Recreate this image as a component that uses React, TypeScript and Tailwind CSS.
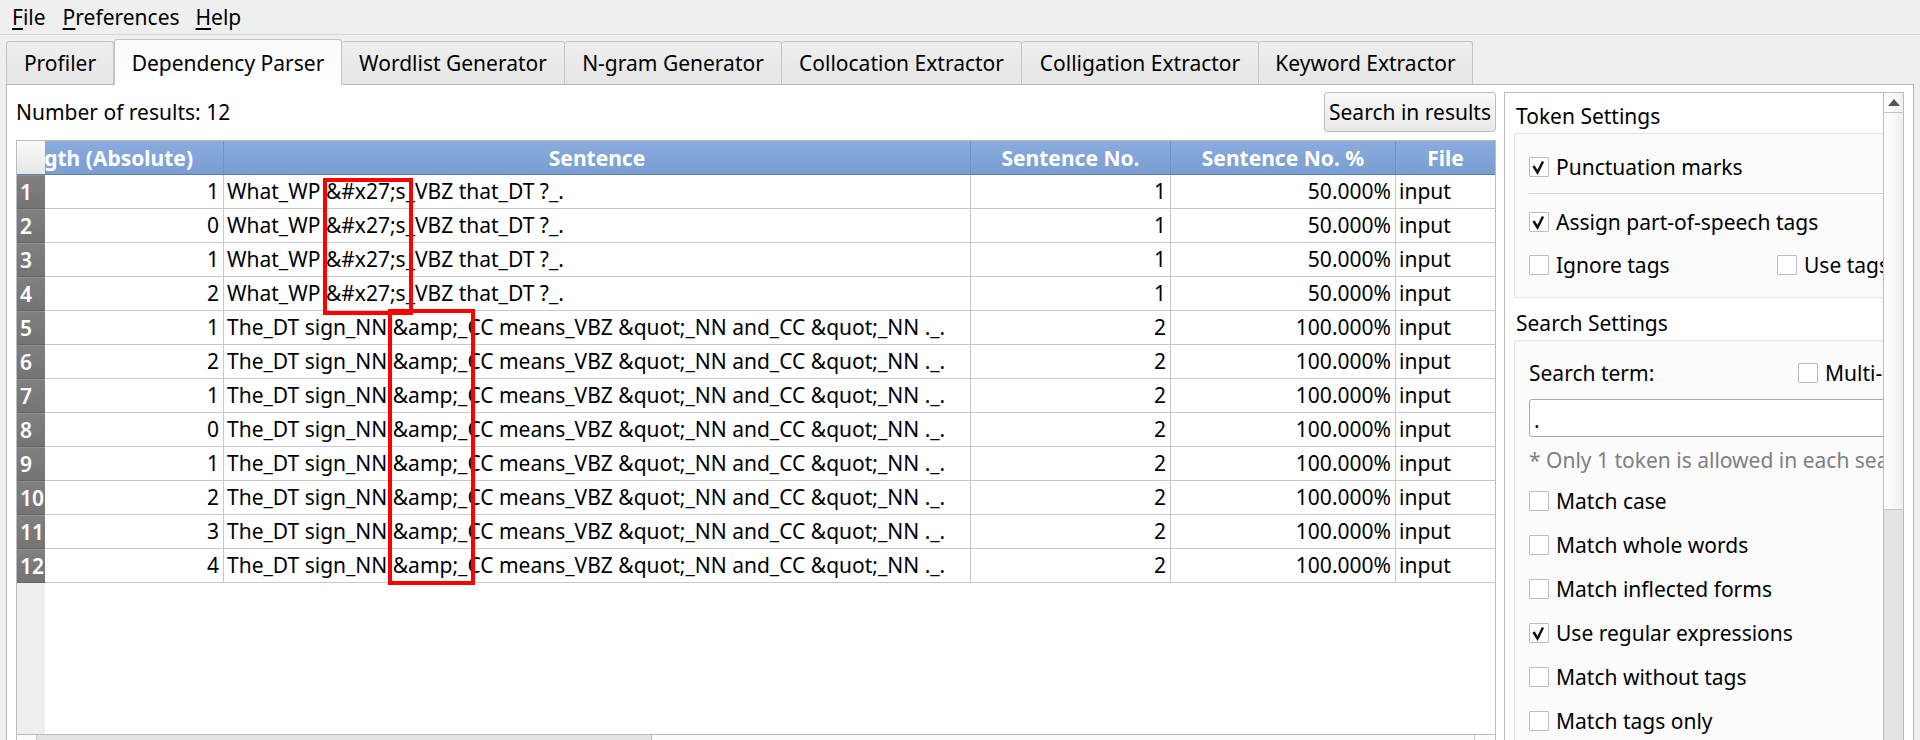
const tabs = [
  { label: "Profiler", width: "w-[108px]" },
  { label: "Dependency Parser", width: "w-[228px]", active: true },
  { label: "Wordlist Generator", width: "w-[223px]" },
  { label: "N-gram Generator", width: "w-[217px]" },
  { label: "Collocation Extractor", width: "w-[240px]" },
  { label: "Colligation Extractor", width: "w-[237px]" },
  { label: "Keyword Extractor", width: "w-[214px]" },
];

const sentenceA = "What_WP &#x27;s_VBZ that_DT ?_.";
const sentenceB = "The_DT sign_NN &amp;_CC means_VBZ &quot;_NN and_CC &quot;_NN ._.";

const rows = [
  { length: 1, sentence: sentenceA, no: 1, pct: "50.000%" },
  { length: 0, sentence: sentenceA, no: 1, pct: "50.000%" },
  { length: 1, sentence: sentenceA, no: 1, pct: "50.000%" },
  { length: 2, sentence: sentenceA, no: 1, pct: "50.000%" },
  { length: 1, sentence: sentenceB, no: 2, pct: "100.000%" },
  { length: 2, sentence: sentenceB, no: 2, pct: "100.000%" },
  { length: 1, sentence: sentenceB, no: 2, pct: "100.000%" },
  { length: 0, sentence: sentenceB, no: 2, pct: "100.000%" },
  { length: 1, sentence: sentenceB, no: 2, pct: "100.000%" },
  { length: 2, sentence: sentenceB, no: 2, pct: "100.000%" },
  { length: 3, sentence: sentenceB, no: 2, pct: "100.000%" },
  { length: 4, sentence: sentenceB, no: 2, pct: "100.000%" },
];

const searchOptions = [
  { label: "Match case" },
  { label: "Match whole words" },
  { label: "Match inflected forms" },
  { label: "Use regular expressions", checked: true },
  { label: "Match without tags" },
  { label: "Match tags only" },
];

const headerCell =
  "flex items-center justify-center overflow-hidden whitespace-nowrap border-r border-[#6f93c4] font-bold text-white";
const bodyCell =
  "flex items-center overflow-hidden whitespace-nowrap border-r border-b border-[#c8c8c8] pb-[2px] pl-[3px] pr-1";

function Checkbox({ checked }: { checked?: boolean }) {
  return (
    <span className="flex h-5 w-5 shrink-0 items-center justify-center rounded-[1px] border border-[#bcbcbc] bg-white">
      {checked && (
        <svg width="16" height="16" viewBox="0 0 16 16" fill="none">
          <path d="M2.5 7 L6.5 13.5 L12 2.5" stroke="#111" strokeWidth="2.5" />
        </svg>
      )}
    </span>
  );
}

function CheckRow({ label, checked }: { label: string; checked?: boolean }) {
  return (
    <div className="flex h-5 items-center gap-2 whitespace-nowrap">
      <Checkbox checked={checked} />
      <span className="ml-[-1px] pb-px">{label}</span>
    </div>
  );
}

export default function App() {
  return (
    <div
      className="relative h-[740px] w-[1920px] overflow-hidden bg-[#efefef] text-[21px] leading-7 text-black"
      style={{ fontFamily: '"Noto Sans", sans-serif' }}
    >
      {/* Menu bar */}
      <div className="flex h-[35px] items-center gap-[17px] border-b border-[#d9d9d9] pl-3">
        <span>
          <span className="underline underline-offset-[3px]">F</span>ile
        </span>
        <span>
          <span className="underline underline-offset-[3px]">P</span>references
        </span>
        <span className="ml-[-1px]">
          <span className="underline underline-offset-[3px]">H</span>elp
        </span>
      </div>

      {/* Tabs */}
      <div className="relative z-10 flex h-[49px] items-end pl-[6px]">
        {tabs.map((tab) =>
          tab.active ? (
            <div
              key={tab.label}
              className={`${tab.width} mb-[-1px] flex h-[46px] items-center justify-center rounded-t-[3px] border border-b-0 border-[#c4c4c4] bg-gradient-to-b from-[#fafafa] to-white`}
            >
              {tab.label}
            </div>
          ) : (
            <div
              key={tab.label}
              className={`${tab.width} flex h-[43px] items-center justify-center rounded-t-[3px] border border-b-0 border-l-0 first:border-l border-[#c4c4c4] bg-gradient-to-b from-[#eeeeee] to-[#e6e6e6]`}
            >
              {tab.label}
            </div>
          ),
        )}
      </div>

      {/* Tab pane */}
      <div className="ml-[6px] flex h-[680px] w-[1908px] gap-2 border border-[#b8b8b8] bg-white pl-[9px] pr-[9px] pt-[7px]">
        {/* Results */}
        <div className="flex w-[1480px] shrink-0 flex-col">
          <div className="flex h-10 items-center justify-between">
            <span>Number of results: 12</span>
            <button className="h-10 w-[172px] whitespace-nowrap rounded-[3px] border border-[#bcbcbc] bg-gradient-to-b from-[#f8f8f8] to-[#e8e8e8]">
              Search in results
            </button>
          </div>

          <div className="mt-2 flex h-[620px] flex-col border border-[#bcbcbc]">
            <div className="grid h-[34px] shrink-0 grid-cols-[28px_179px_747px_200px_225px_99px] border-b border-[#5d80b3] bg-gradient-to-b from-[#8aabde] to-[#7a9ecf]">
              <div className="bg-gradient-to-b from-[#fafafa] to-[#e6e6e6]" />
              <div className="flex items-center justify-end overflow-hidden whitespace-nowrap border-r border-[#6f93c4] pr-[30px] font-bold text-white">
                gth (Absolute)
              </div>
              <div className={headerCell}>Sentence</div>
              <div className={headerCell}>Sentence No.</div>
              <div className={headerCell}>Sentence No. %</div>
              <div className="flex items-center justify-center font-bold text-white">File</div>
            </div>

            {rows.map((row, i) => (
              <div key={i} className="grid h-[34px] shrink-0 grid-cols-[28px_179px_747px_200px_225px_99px]">
                <div className="flex items-center border-y-[1px] border-t-[#8e8e8e] border-b-[#666] bg-gradient-to-b from-[#808080] to-[#747474] pl-[3px] font-semibold text-white">
                  {i + 1}
                </div>
                <div className={`${bodyCell} justify-end`}>{row.length}</div>
                <div className={bodyCell}>{row.sentence}</div>
                <div className={`${bodyCell} justify-end`}>{row.no}</div>
                <div className={`${bodyCell} justify-end`}>{row.pct}</div>
                <div className="flex items-center border-b border-[#c8c8c8] pb-[2px] pl-[3px]">input</div>
              </div>
            ))}

            <div className="flex-1">
              <div className="h-full w-7 bg-[#eeeeee]" />
            </div>

            {/* Horizontal scrollbar */}
            <div className="flex h-[25px] shrink-0 border-t border-[#bcbcbc]">
              <div className="w-5 border-r border-[#c8c8c8] bg-[#fafafa]" />
              <div className="w-[615px] border-r border-[#bcbcbc] bg-[#e3e3e3]" />
              <div className="w-[823px] border-r border-[#c8c8c8] bg-[#fafafa]" />
              <div className="flex-1 bg-[#fafafa]" />
            </div>
          </div>
        </div>

        {/* Settings panel */}
        <div className="flex h-[660px] w-[400px] shrink-0 border border-[#bcbcbc] bg-white">
          <div className="flex-1 overflow-hidden">
            <div className="w-[560px] pl-[9px] pt-[10px]">
              <div className="flex h-[30px] items-start pl-[2px] leading-[26px]">Token Settings</div>
              <div className="rounded-[2px] border border-[#e4e4e4] bg-[#fbfbfb] pb-[22px] pl-[14px] pt-[23px]">
                <CheckRow label="Punctuation marks" checked />
                <div className="mt-4 h-px bg-[#d4d4d4]" />
                <div className="mt-[18px]">
                  <CheckRow label="Assign part-of-speech tags" checked />
                </div>
                <div className="mt-[23px] flex">
                  <div className="w-[248px] shrink-0">
                    <CheckRow label="Ignore tags" />
                  </div>
                  <CheckRow label="Use tags only" />
                </div>
              </div>

              <div className="flex h-[42px] items-start pl-[2px] pt-[12px] leading-[26px]">Search Settings</div>
              <div className="rounded-[2px] border border-[#e4e4e4] bg-[#fbfbfb] pb-6 pl-[14px] pt-[22px]">
                <div className="flex h-5 items-center whitespace-nowrap">
                  <div className="w-[269px] shrink-0">Search term:</div>
                  <CheckRow label="Multi-search mode" />
                </div>
                <div className="mt-4 flex h-[38px] items-end rounded-[3px] border border-[#a8a8a8] bg-white pb-[2px] pl-1">
                  .
                </div>
                <div className="mt-[10px] whitespace-nowrap leading-[26px] text-[#808080]">
                  * Only 1 token is allowed in each search term
                </div>
                <div className="mt-[18px] flex flex-col gap-6">
                  {searchOptions.map((option) => (
                    <CheckRow key={option.label} label={option.label} checked={option.checked} />
                  ))}
                </div>
              </div>
            </div>
          </div>

          {/* Vertical scrollbar */}
          <div className="flex w-5 shrink-0 flex-col border-l border-[#bcbcbc] bg-[#e3e3e3]">
            <div className="flex h-5 items-center justify-center border-b border-[#c4c4c4] bg-gradient-to-r from-white to-[#f0f0f0]">
              <div className="h-0 w-0 border-x-[6px] border-b-[7px] border-x-transparent border-b-[#555]" />
            </div>
            <div className="h-[397px] border-b border-[#c4c4c4] bg-gradient-to-r from-white to-[#f0f0f0]" />
          </div>
        </div>
      </div>

      {/* Red annotation boxes */}
      <div className="absolute left-[323px] top-[178px] z-20 h-[137px] w-[90px] border-4 border-[#ff0000]" />
      <div className="absolute left-[388px] top-[309px] z-20 h-[276px] w-[87px] border-4 border-[#ff0000]" />
    </div>
  );
}
